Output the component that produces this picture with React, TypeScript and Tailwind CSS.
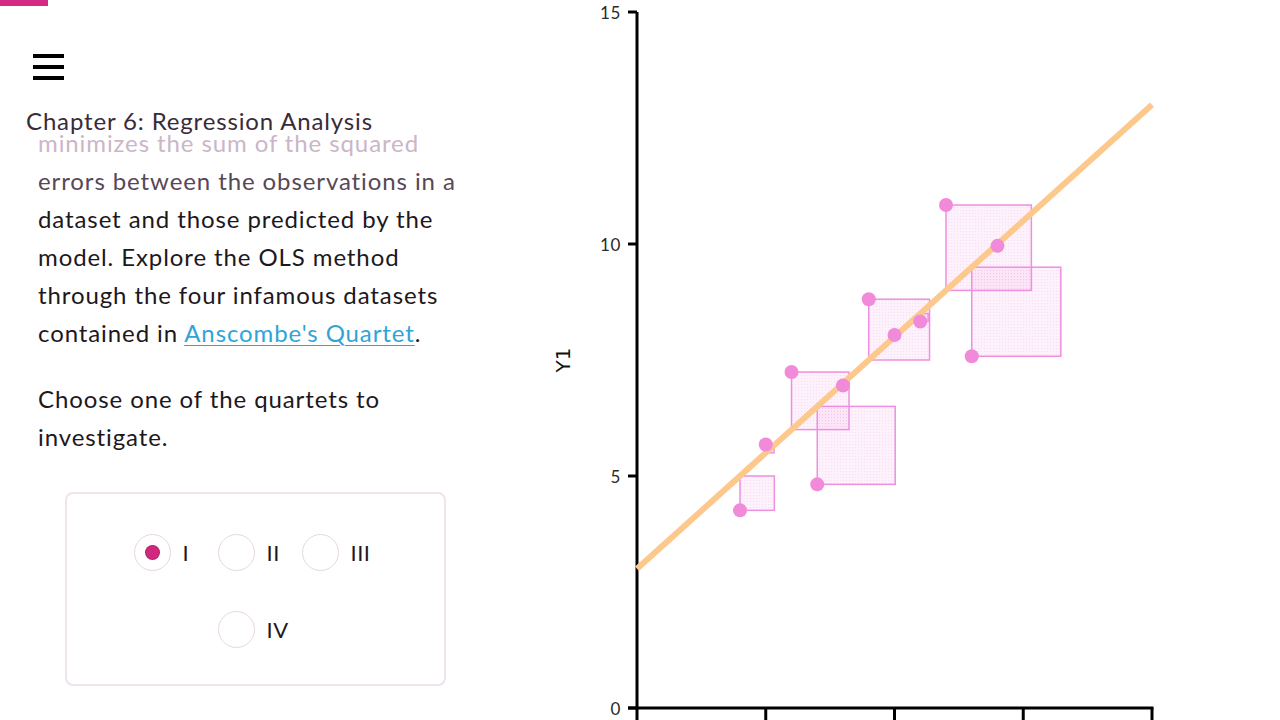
import React, { useState } from 'react';

// Anscombe quartet, dataset I
const XS = [10, 8, 13, 9, 11, 14, 6, 4, 12, 7, 5];
const Y1 = [8.04, 6.95, 7.58, 8.81, 8.33, 9.96, 7.24, 4.26, 10.84, 4.82, 5.68];

const X0 = 637;
const Y0 = 708;
const SX = 25.75;
const SY = 46.4;
const px = (x: number) => X0 + x * SX;
const py = (y: number) => Y0 - y * SY;
const fit = (x: number) => 3 + 0.5 * x;

const QUARTETS = ['I', 'II', 'III', 'IV'];

function Chart() {
  return (
    <svg width="800" height="720" viewBox="480 0 800 720" className="block">
      <defs>
        <pattern id="dots" width="3" height="3" patternUnits="userSpaceOnUse">
          <rect width="3" height="3" fill="#f590e2" fillOpacity="0.12" />
          <rect width="1" height="1" fill="#e9a0dc" fillOpacity="0.25" />
        </pattern>
      </defs>

      <text
        x="563"
        y="360"
        transform="rotate(-90 563 360)"
        textAnchor="middle"
        dominantBaseline="central"
        fontSize="20"
        fontFamily="'DejaVu Sans', sans-serif"
        fill="#111"
      >
        Y1
      </text>

      {[0, 5, 10, 15].map((t) => (
        <g key={t}>
          <line x1={628} x2={X0} y1={py(t)} y2={py(t)} stroke="#000" strokeWidth="3" />
          <text
            x="621"
            y={py(t)}
            textAnchor="end"
            dominantBaseline="central"
            fontSize="17"
            letterSpacing="0.6"
            fontFamily="Lato, sans-serif"
            fill="#2a2a2a"
          >
            {t}
          </text>
        </g>
      ))}
      {[0, 5, 10, 15, 20].map((t) => (
        <line key={t} x1={px(t)} x2={px(t)} y1={Y0} y2={720} stroke="#000" strokeWidth="3" />
      ))}
      <line x1={X0} x2={X0} y1={py(15)} y2={Y0 + 1.5} stroke="#000" strokeWidth="3" />
      <line x1={628} x2={px(20) + 1.5} y1={Y0} y2={Y0} stroke="#000" strokeWidth="3" />

      {XS.map((x, i) => {
        const y = Y1[i];
        const side = Math.abs(y - fit(x)) * SY;
        const top = Math.min(py(y), py(fit(x)));
        return (
          <rect
            key={i}
            x={px(x)}
            y={top}
            width={side}
            height={side}
            fill="url(#dots)"
            stroke="#ee8fe0"
            strokeWidth="1.5"
          />
        );
      })}

      <line
        x1={px(0)}
        y1={py(fit(0))}
        x2={px(20)}
        y2={py(fit(20))}
        stroke="#fdc88c"
        strokeWidth="6"
      />

      {XS.map((x, i) => (
        <circle key={i} cx={px(x)} cy={py(Y1[i])} r="7" fill="#f08ad9" />
      ))}
    </svg>
  );
}

function Radio({ label, checked, onClick }: { label: string; checked: boolean; onClick: () => void }) {
  return (
    <button onClick={onClick} className="flex w-[84px] items-center gap-3 text-left">
      <span className="flex h-[37px] w-[37px] shrink-0 items-center justify-center rounded-full border border-[#e6d8e3] bg-white">
        {checked && <span className="h-[13px] w-[13px] rounded-full bg-[#d1287f] ring-1 ring-[#b81f6d]" />}
      </span>
      <span className="text-[22px] leading-none tracking-[0.5px] text-[#1e1a1e]">{label}</span>
    </button>
  );
}

export default function App() {
  const [sel, setSel] = useState('I');

  return (
    <div className="flex h-[720px] w-[1280px] overflow-hidden bg-white font-['Lato',sans-serif]">
      <div className="relative w-[480px] shrink-0">
        <div className="absolute left-0 top-0 h-[6px] w-[48px] bg-[#d42a86]" />

        <div className="ml-[33px] flex w-[31px] flex-col gap-[7.5px] pt-[54px]">
          <span className="h-[3.5px] bg-black" />
          <span className="h-[3.5px] bg-black" />
          <span className="h-[3.5px] bg-black" />
        </div>

        <h1 className="relative z-10 ml-[26px] mt-[27px] text-[24px] font-normal leading-[28px] tracking-[0.85px] text-[#3a2b39]">
          Chapter 6: Regression Analysis
        </h1>

        <div className="-mt-[11px] ml-[38px] whitespace-nowrap text-[24px] leading-[38px] tracking-[0.9px] text-[#1d181d]">
          <p>
            <span className="text-[#cbb6c8]">minimizes the sum of the squared</span>
            <br />
            <span className="text-[#574857]">errors between the observations in a</span>
            <br />
            dataset and those predicted by the
            <br />
            model. Explore the OLS method
            <br />
            through the four infamous datasets
            <br />
            contained in{' '}
            <a href="#" className="text-[#2fa4d8] underline decoration-1 underline-offset-[3px]">
              Anscombe's Quartet
            </a>
            .
          </p>
          <p className="mt-[28px]">
            Choose one of the quartets to
            <br />
            investigate.
          </p>
        </div>

        <div className="ml-[65px] mt-[36px] flex h-[194px] w-[381px] items-center justify-center rounded-lg border-2 border-[#efe4ed] pt-[5px]">
          <div className="ml-[8px] flex w-[252px] flex-wrap justify-center gap-y-[40px]">
            {QUARTETS.map((q) => (
              <Radio key={q} label={q} checked={sel === q} onClick={() => setSel(q)} />
            ))}
          </div>
        </div>
      </div>

      <div className="flex-1">
        <Chart />
      </div>
    </div>
  );
}
